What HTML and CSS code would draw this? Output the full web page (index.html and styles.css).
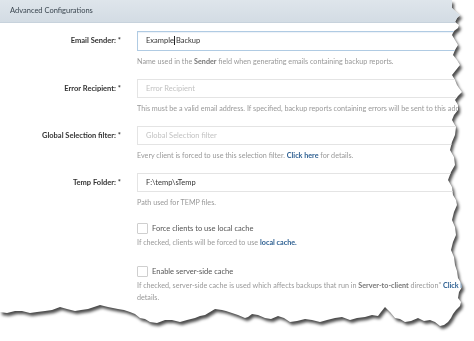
FILE: index.html
```html
<!doctype html>
<html lang="en">
<head>
    <meta charset="UTF-8">
    <title>Advanced Configurations</title>
    <link rel="stylesheet" href="styles.css">
</head>
<body>
<div class="sheet">
    <div class="paper">
        <div class="panel-heading">Advanced Configurations</div>
        <form class="form">
            <div class="row">
                <label class="col-label">Email Sender: *</label>
                <div class="col-field">
                    <div class="input focus">Example<span class="caret"></span>Backup</div>
                    <p class="help">Name used in the <b>Sender</b> field when generating emails containing backup reports.</p>
                </div>
            </div>
            <div class="row">
                <label class="col-label">Error Recipient: *</label>
                <div class="col-field">
                    <div class="input empty">Error Recipient</div>
                    <p class="help">This must be a valid email address. If specified, backup reports containing errors will be sent to this address.</p>
                </div>
            </div>
            <div class="row">
                <label class="col-label">Global Selection filter: *</label>
                <div class="col-field">
                    <div class="input empty">Global Selection filter</div>
                    <p class="help">Every client is forced to use this selection filter. <a href="#">Click here</a> for details.</p>
                </div>
            </div>
            <div class="row">
                <label class="col-label">Temp Folder: *</label>
                <div class="col-field">
                    <div class="input">F:\temp\sTemp</div>
                    <p class="help">Path used for TEMP files.</p>
                </div>
            </div>
            <div class="row check-row">
                <span class="col-label"></span>
                <div class="col-field">
                    <label class="check"><span class="box"></span>Force clients to use local cache</label>
                    <p class="help">If checked, clients will be forced to use <a href="#">local cache.</a></p>
                </div>
            </div>
            <div class="row check-row">
                <span class="col-label"></span>
                <div class="col-field">
                    <label class="check"><span class="box"></span>Enable server-side cache</label>
                    <p class="help">If checked, server-side cache is used which affects backups that run in <b>Server-to-client</b> direction" <a href="#">Click here</a> for details.</p>
                </div>
            </div>
            <div class="row check-row">
                <span class="col-label"></span>
                <div class="col-field">
                    <label class="check"><span class="box"></span>Use server-to-client mode</label>
                </div>
            </div>
        </form>
    </div>
</div>
</body>
</html>
```

FILE: styles.css
```css
html,
body {
    margin: 0;
    background: #fff;
}

.sheet {
    width: 474px;
    height: 341px;
    filter: drop-shadow(2px 3px 1.5px rgba(0, 0, 0, .7));
}

.paper {
    width: 474px;
    height: 341px;
    overflow: hidden;
    background: #fff;
    font-family: Lato, "Liberation Sans", sans-serif;
    /* torn edge right + bottom */
    clip-path: polygon(0 0, 452px 0, 452px 8px, 456px 12px, 460px 15px, 457px 18px, 455px 22px, 459px 25px, 458px 28px, 454px 31px, 452px 35px, 455px 40px, 458px 45px, 455px 50px, 453px 55px, 457px 60px, 460px 65px, 456px 70px, 452px 75px, 455px 80px, 457px 85px, 459px 88px, 462px 92px, 458px 96px, 455px 100px, 458px 105px, 458px 110px, 454px 115px, 452px 120px, 456px 127px, 455px 135px, 452px 142px, 450px 150px, 454px 157px, 455px 165px, 451px 172px, 448px 180px, 452px 187px, 453px 195px, 456px 200px, 457px 205px, 454px 212px, 452px 220px, 455px 227px, 456px 235px, 453px 242px, 451px 250px, 454px 257px, 455px 265px, 457px 271px, 458px 278px, 461px 283px, 462px 287px, 459px 292px, 458px 298px, 461px 302px, 460px 306px, 456px 310px, 453px 314px, 451px 318px, 448px 322px, 444px 325px, 440px 326px, 435px 322px, 430px 320px, 424px 321px, 418px 318px, 411px 321px, 405px 322px, 400px 319px, 395px 318px, 390px 312px, 385px 307px, 381px 312px, 378px 316px, 372px 315px, 365px 317px, 357px 318px, 350px 320px, 342px 317px, 335px 318px, 327px 320px, 320px 322px, 312px 320px, 305px 319px, 297px 321px, 290px 322px, 284px 318px, 278px 316px, 271px 319px, 265px 318px, 258px 315px, 252px 314px, 248px 317px, 245px 318px, 238px 315px, 232px 313px, 226px 311px, 222px 310px, 215px 309px, 210px 312px, 205px 315px, 200px 316px, 195px 318px, 187px 320px, 180px 322px, 172px 320px, 165px 320px, 157px 323px, 150px 322px, 145px 319px, 140px 318px, 135px 314px, 130px 312px, 124px 310px, 118px 309px, 108px 307px, 100px 305px, 94px 307px, 88px 309px, 81px 310px, 75px 311px, 67px 309px, 60px 307px, 52px 310px, 45px 311px, 37px 312px, 30px 313px, 22px 311px, 15px 311px, 7px 313px, 0 312px);
}

.panel-heading {
    height: 22px;
    line-height: 22px;
    padding-left: 10px;
    font-size: 7.5px;
    color: #3b4650;
    background: linear-gradient(#dee5eb, #d3dce4);
    border-bottom: 1px solid #c7d2dc;
}

.form {
    padding-top: 8px;
}

.row {
    display: grid;
    grid-template-columns: 121px 362px;
    column-gap: 16px;
    margin-bottom: 11px;
}

.col-label {
    text-align: right;
    font-size: 7.5px;
    font-weight: bold;
    line-height: 19px;
    color: #333;
}

.input {
    box-sizing: border-box;
    height: 19px;
    line-height: 17px;
    padding-left: 8px;
    border: 1px solid #e4e4e4;
    font-size: 7.5px;
    color: #333;
}

.input.focus {
    height: 20px;
    border-color: #b0cbe3;
    box-shadow: inset 0 1px 1px rgba(120, 160, 200, .15);
}

.input.empty {
    color: #c2c2c2;
}

.caret {
    display: inline-block;
    width: 1px;
    height: 9px;
    margin: 0 .5px;
    vertical-align: -2px;
    background: #222;
}

.help {
    margin: 5px 0 0;
    font-size: 7.2px;
    line-height: 12px;
    color: #999;
}

.help b {
    color: #777;
}

.help a {
    font-weight: bold;
    color: #2d5f91;
    text-decoration: none;
}

.check-row {
    margin-bottom: 14px;
}

.check {
    display: flex;
    align-items: center;
    height: 16px;
    font-size: 7.5px;
    color: #555;
}

.check-row .help {
    margin-top: 1px;
}

.box {
    box-sizing: border-box;
    width: 11px;
    height: 11px;
    margin-right: 4px;
    border: 1px solid #cfcfcf;
    border-radius: 1px;
    background: #fff;
}
```
